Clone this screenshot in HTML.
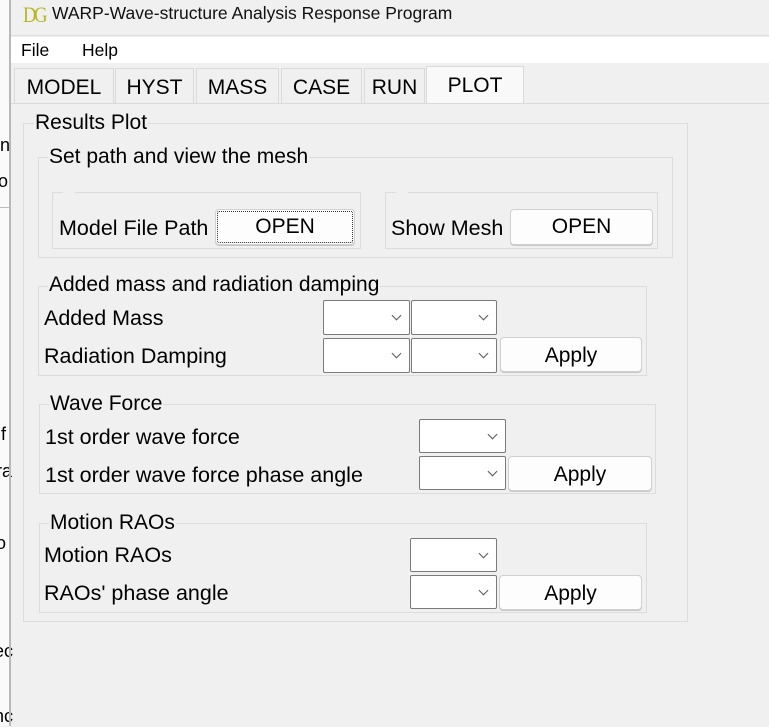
<!DOCTYPE html>
<html><head><style>
*{margin:0;padding:0;box-sizing:border-box}
body{width:769px;height:726px;background:#f0f0f0;position:relative;overflow:hidden;font-family:"Liberation Sans",sans-serif;color:#000}
.a{position:absolute;white-space:nowrap}
.g{position:absolute;border:1px solid #dcdcdc}
.lbl{position:absolute;background:#f0f0f0;padding:0 1px;font-size:21px;line-height:22px}
.t{position:absolute;font-size:21.5px;line-height:22px;white-space:nowrap}
.cb{position:absolute;background:#fff;border:1px solid #7a7a7a;border-radius:2px}
.cb:after{content:"";position:absolute;right:9px;top:11px;width:6px;height:6px;border-right:1px solid #555;border-bottom:1px solid #555;transform:rotate(45deg)}
.bt{position:absolute;background:#fdfdfd;border:1px solid #d0d0d0;border-radius:4px;font-size:21px;text-align:center;box-shadow:0 1px 0 #c8c8c8}
.tab{position:absolute;top:68px;height:35px;background:#f0f0f0;border:1px solid #dadada;border-bottom:none;font-size:21px;line-height:38px;text-align:center}
</style></head><body>
<div class="a" style="left:0;top:0;width:10px;height:726px;background:#fafafa"></div>
<div class="a" style="left:0;top:207px;width:10px;height:1px;background:#bbb"></div>
<div class="a" style="left:0;top:135px;font-size:18px">n</div>
<div class="a" style="left:-2px;top:171px;font-size:18px">o</div>
<div class="a" style="left:1px;top:424px;font-size:18px">f</div>
<div class="a" style="left:-4px;top:461px;font-size:18px">ra</div>
<div class="a" style="left:-4px;top:533px;font-size:18px">o</div>
<div class="a" style="left:-6px;top:641px;font-size:18px">ec</div>
<div class="a" style="left:-6px;top:706px;font-size:18px">nc</div>
<div class="a" style="left:9px;top:0;width:2px;height:726px;background:#b8b8b8"></div>
<div class="a" style="left:11px;top:0;width:758px;height:36px;background:#f0f0f0;border-bottom:1px solid #ddd"></div>
<div class="a" style="left:23px;top:2px;font-family:'Liberation Serif',serif;font-size:22px;color:#b9b620;letter-spacing:-3px;transform:scaleX(0.85);transform-origin:left">DG</div>
<div class="a" style="left:52px;top:3px;font-size:17.5px;color:#111">WARP-Wave-structure Analysis Response Program</div>
<div class="a" style="left:11px;top:37px;width:758px;height:26px;background:#fff"></div>
<div class="a" style="left:21px;top:40px;font-size:17.5px">File</div>
<div class="a" style="left:82px;top:40px;font-size:17.5px">Help</div>
<div class="tab" style="left:14px;width:100px">MODEL</div>
<div class="tab" style="left:115px;width:79px">HYST</div>
<div class="tab" style="left:196px;width:83px">MASS</div>
<div class="tab" style="left:281px;width:81px">CASE</div>
<div class="tab" style="left:364px;width:61px">RUN</div>
<div class="tab" style="left:426px;top:66px;height:38px;width:98px;background:#f9f9f9;line-height:38px">PLOT</div>
<div class="a" style="left:11px;top:103px;width:758px;height:1px;background:#dadada"></div>

<div class="g" style="left:23px;top:123px;width:665px;height:499px"></div>
<div class="lbl" style="left:34px;top:112px">Results Plot</div>

<div class="g" style="left:38px;top:157px;width:635px;height:101px"></div>
<div class="lbl" style="left:48px;top:146px">Set path and view the mesh</div>
<div class="g" style="left:52px;top:192px;width:309px;height:57px"></div>
<div class="a" style="left:63px;top:189px;width:12px;height:5px;background:#f0f0f0"></div>
<div class="t" style="left:59px;top:217px">Model File Path</div>
<div class="bt" style="left:215px;top:209px;width:140px;height:36px;line-height:34px;outline:1px dotted #333;outline-offset:-3px">OPEN</div>
<div class="g" style="left:385px;top:192px;width:273px;height:57px"></div>
<div class="a" style="left:396px;top:189px;width:12px;height:5px;background:#f0f0f0"></div>
<div class="t" style="left:391px;top:217px">Show Mesh</div>
<div class="bt" style="left:510px;top:209px;width:143px;height:36px;line-height:34px">OPEN</div>

<div class="g" style="left:38px;top:286px;width:609px;height:90px"></div>
<div class="lbl" style="left:48px;top:274px">Added mass and radiation damping</div>
<div class="t" style="left:44px;top:307px">Added Mass</div>
<div class="t" style="left:44px;top:345px">Radiation Damping</div>
<div class="cb" style="left:323px;top:300px;width:87px;height:35px"></div>
<div class="cb" style="left:411px;top:300px;width:86px;height:35px"></div>
<div class="cb" style="left:323px;top:338px;width:87px;height:35px"></div>
<div class="cb" style="left:411px;top:338px;width:86px;height:35px"></div>
<div class="bt" style="left:500px;top:337px;width:142px;height:35px;line-height:35px">Apply</div>

<div class="g" style="left:39px;top:404px;width:617px;height:90px"></div>
<div class="lbl" style="left:49px;top:393px">Wave Force</div>
<div class="t" style="left:45px;top:426px">1st order wave force</div>
<div class="t" style="left:45px;top:464px">1st order wave force phase angle</div>
<div class="cb" style="left:419px;top:419px;width:87px;height:34px"></div>
<div class="cb" style="left:419px;top:456px;width:87px;height:34px"></div>
<div class="bt" style="left:508px;top:456px;width:144px;height:35px;line-height:35px">Apply</div>

<div class="g" style="left:39px;top:523px;width:608px;height:90px"></div>
<div class="lbl" style="left:49px;top:512px">Motion RAOs</div>
<div class="t" style="left:44px;top:544px">Motion RAOs</div>
<div class="t" style="left:44px;top:582px">RAOs' phase angle</div>
<div class="cb" style="left:410px;top:538px;width:87px;height:34px"></div>
<div class="cb" style="left:410px;top:575px;width:87px;height:34px"></div>
<div class="bt" style="left:499px;top:575px;width:143px;height:35px;line-height:35px">Apply</div>
</body></html>
